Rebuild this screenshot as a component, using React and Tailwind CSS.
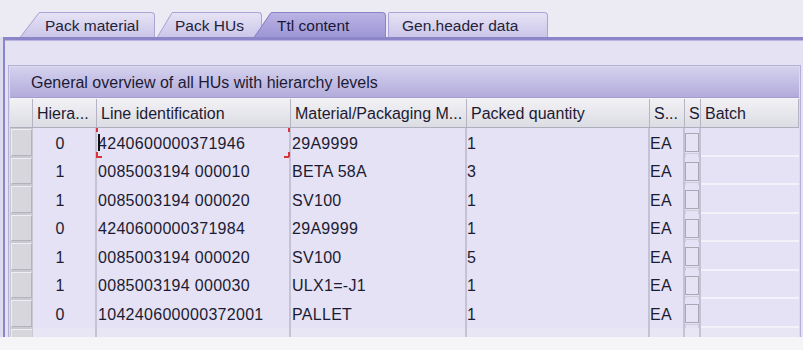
const rows = [
  { lvl: '0', line: '4240600000371946', mat: '29A9999', qty: '1', unit: 'EA', focus: true },
  { lvl: '1', line: '0085003194 000010', mat: 'BETA 58A', qty: '3', unit: 'EA' },
  { lvl: '1', line: '0085003194 000020', mat: 'SV100', qty: '1', unit: 'EA' },
  { lvl: '0', line: '4240600000371984', mat: '29A9999', qty: '1', unit: 'EA' },
  { lvl: '1', line: '0085003194 000020', mat: 'SV100', qty: '5', unit: 'EA' },
  { lvl: '1', line: '0085003194 000030', mat: 'ULX1=-J1', qty: '1', unit: 'EA' },
  { lvl: '0', line: '104240600000372001', mat: 'PALLET', qty: '1', unit: 'EA' },
]

const cols = 'grid grid-cols-[23px_64px_194px_176px_183px_35px_16px_98px]'

function Slant({ id, from, to, stroke, w }) {
  return (
    <svg width={w} height="25" viewBox={`0 0 ${w} 25`} className="block shrink-0">
      <defs>
        <linearGradient id={id} x1="0" y1="0" x2="0" y2="1">
          <stop offset="0" stopColor={from} />
          <stop offset="1" stopColor={to} />
        </linearGradient>
      </defs>
      <polygon points={`0,25 ${w - 4},1 ${w},0 ${w},25`} fill={`url(#${id})`} />
      <line x1="0.5" y1="25" x2={w - 3} y2="0.8" stroke={stroke} strokeWidth="1" />
      <line x1={w - 3} y1="0.5" x2={w} y2="0.5" stroke={stroke} strokeWidth="1" />
    </svg>
  )
}

function Tab({ label, active, slant, width, className = '', pad = 'pl-[3px]' }) {
  const from = active ? '#bab3e4' : '#e6e3f5'
  const to = active ? '#9e96d5' : '#cbc6e9'
  const stroke = active ? '#8a83c4' : '#aaa4d4'
  return (
    <div className={`flex items-end ${className}`}>
      {slant ? <Slant id={label.replace(/\W/g, '')} from={from} to={to} stroke={stroke} w={slant} /> : null}
      <div
        className={`h-[25px] flex items-center pt-[2px] border-t border-r rounded-tr-[4px] ${pad} ${
          active
            ? 'bg-gradient-to-b from-[#bab3e4] to-[#9e96d5] border-[#8a83c4] text-[#1a1836]'
            : 'bg-gradient-to-b from-[#e6e3f5] to-[#cbc6e9] border-[#aaa4d4] text-[#24223a]'
        } ${slant ? '' : 'border-l rounded-tl-[2px]'}`}
        style={{ width }}
      >
        {label}
      </div>
    </div>
  )
}

function HeadCell({ children, className = '' }) {
  return (
    <div className={`h-[28px] flex items-center pl-[4px] pt-[1px] border-r border-[#b4b4c2] bg-gradient-to-b from-[#f1f1f5] to-[#dcdce4] overflow-hidden whitespace-nowrap ${className}`}>
      {children}
    </div>
  )
}

function Row({ r }) {
  const cell = 'flex items-center pt-[3px] border-r-2 border-[#c4c2d4]'
  return (
    <div className={`${cols} h-[28.5px] shrink-0 tracking-[0.3px]`}>
      <div className="p-[1px] bg-[#c9c9d1]">
        <div className="h-full bg-[#d6d6dc] border-t border-l border-[#eeeef2] border-r border-b border-r-[#b3b3bb] border-b-[#b3b3bb]" />
      </div>
      <div className={`${cell} justify-center pr-[8px]`}>{r.lvl}</div>
      <div className={`${cell} relative pl-[1px]`}>
        {r.line}
        {r.focus ? (
          <>
            <span className="absolute left-[-1px] top-[-2px] w-[6px] h-[6px] border-l-2 border-t-2 border-[#d8343a]" />
            <span className="absolute left-[-1px] bottom-[-1px] w-[6px] h-[6px] border-l-2 border-b-2 border-[#d8343a]" />
            <span className="absolute right-[-1px] top-[-2px] w-[6px] h-[6px] border-r-2 border-t-2 border-[#d8343a]" />
            <span className="absolute right-[-1px] bottom-[-1px] w-[6px] h-[6px] border-r-2 border-b-2 border-[#d8343a]" />
            <span className="absolute left-[1px] top-[6px] w-[2px] h-[17px] bg-[#111]" />
          </>
        ) : null}
      </div>
      <div className={`${cell} pl-[1px]`}>{r.mat}</div>
      <div className={cell}>{r.qty}</div>
      <div className={cell}>{r.unit}</div>
      <div className="flex flex-col items-center border-r-2 border-[#c4c2d4]">
        <div className="mt-[5px] w-[14px] h-[19px] shrink-0 border border-[#a9a9b3] bg-[#e6e4f4]" />
        <div className="mt-[1px] w-[14px] flex-1 border-x border-t border-[#cfcdda]" />
      </div>
      <div className="border-b-2 border-[#f3f2fa]" />
    </div>
  )
}

export default function App() {
  return (
    <div className="w-[803px] h-[350px] overflow-hidden flex flex-col bg-[#f5f5f8] text-[16px] text-[#1d1b33] font-['Liberation_Sans',sans-serif]">
      <div className="h-[37px] shrink-0 flex items-end pl-[20px] bg-[#ecebf4] text-[15.5px]">
        <Tab label="Pack material" slant={22} width={113} />
        <Tab label="Pack HUs" slant={18} width={87} className="ml-[2px]" pad="pl-[0px]" />
        <Tab label="Ttl content" slant={20} width={112} className="ml-[-8px] relative z-10" active />
        <Tab label="Gen.header data" width={160} className="ml-[2px]" pad="pl-[13px]" />
      </div>

      <div className="h-[300px] shrink-0 flex bg-[#e2e0f0] overflow-hidden">
        <div className="w-[3px] shrink-0 bg-[#dedcef]" />
        <div className="flex-1 min-h-0 flex flex-col border-l-2 border-t-[3px] border-[#8c85c8] bg-[#e4e2f3]">
          <div className="h-[1px] shrink-0 bg-[#b9b4df]" />
          <div className="h-[24px] shrink-0" />
          <div className="ml-[3px] w-[793px] flex-1 min-h-0 flex flex-col border border-[#b5b0d8] border-b-0 bg-[#dcdaeb] px-[1px] pt-[1px] overflow-hidden">
            <div className="h-[31px] shrink-0 flex items-center pl-[21px] pt-[1px] bg-gradient-to-b from-[#d4d1ee] to-[#b3acdb] border-b border-[#a49dd0]">
              General overview of all HUs with hierarchy levels
            </div>
            <div className={`${cols} shrink-0 border-b border-[#aeaebc] border-t border-t-[#f4f4f8]`}>
              <HeadCell />
              <HeadCell>Hiera...</HeadCell>
              <HeadCell className="pl-[4px]">Line identification</HeadCell>
              <HeadCell className="pl-[3px]">Material/Packaging M...</HeadCell>
              <HeadCell className="pl-[3px]">Packed quantity</HeadCell>
              <HeadCell className="pl-[3px]">S...</HeadCell>
              <HeadCell className="pl-[2px]">S</HeadCell>
              <HeadCell className="pl-[3px]">Batch</HeadCell>
            </div>
            <div className="flex-1 min-h-0 flex flex-col overflow-hidden bg-[#e4e2f4]">
              {rows.map((r, i) => (
                <Row key={i} r={r} />
              ))}
              <div className={`${cols} flex-1 bg-[#e8e6f5]`}>
                <div className="p-[1px] pb-0 bg-[#c9c9d1]">
                  <div className="h-full bg-[#d6d6dc] border-t border-l border-[#eeeef2]" />
                </div>
                <div className="border-r-2 border-[#c4c2d4]" />
                <div className="border-r-2 border-[#c4c2d4]" />
                <div className="border-r-2 border-[#c4c2d4]" />
                <div className="border-r-2 border-[#c4c2d4]" />
                <div className="border-r-2 border-[#c4c2d4]" />
                <div className="border-r-2 border-[#c4c2d4]" />
                <div />
              </div>
            </div>
          </div>
        </div>
      </div>
    </div>
  )
}
